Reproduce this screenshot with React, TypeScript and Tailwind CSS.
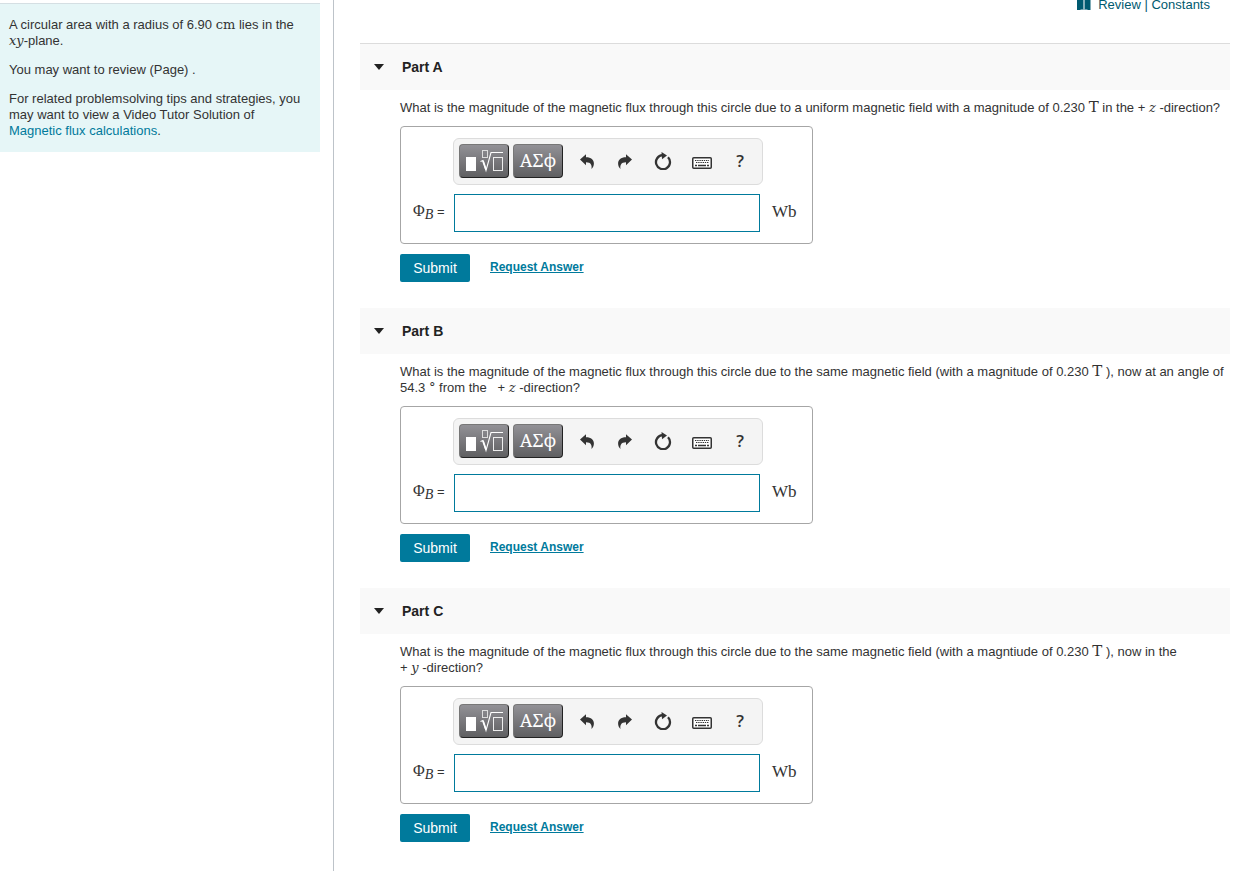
import type { ReactNode } from "react";

function MathText({ children, italic = false }: { children: ReactNode; italic?: boolean }) {
  return (
    <span
      className={
        italic
          ? "font-['DejaVu_Serif',serif] text-[13px] leading-3 italic"
          : "font-['DejaVu_Serif',serif] text-[13px] leading-3"
      }
    >
      {children}
    </span>
  );
}

function Unit({ children }: { children: ReactNode }) {
  return <span className="font-['DejaVu_Serif',serif] text-[15px] leading-3">{children}</span>;
}

function TemplatesIcon() {
  return (
    <svg width="38" height="24" viewBox="0 0 38 24" fill="none" aria-hidden="true">
      <rect x="1" y="8" width="10" height="14" fill="#fff" />
      <rect x="17.500" y="1.500" width="5" height="7" stroke="#ddd" />
      <path d="M15.500 12.500l2.500-1 3 10L26 3.500H38" stroke="#fff" strokeWidth="1.100" />
      <path d="M18 12l3 8.500" stroke="#fff" strokeWidth="1.800" />
      <rect x="28.500" y="8.500" width="9" height="13" stroke="#eee" />
    </svg>
  );
}

function UndoIcon() {
  return (
    <svg width="14" height="15" viewBox="0 0 14 15" aria-hidden="true">
      <path d="M0 5.500L6 .2V3.200c5.200 0 7.900 2.600 7.900 6.300 0 2.200-.8 4-2.400 5.500.6-4-.5-6.800-5.500-6.800v3z" fill="#333" />
    </svg>
  );
}

function RedoIcon() {
  return (
    <svg width="14" height="15" viewBox="0 0 14 15" aria-hidden="true">
      <path d="M14 5.500L8 .2V3.200C2.800 3.200.1 5.800.1 9.500c0 2.200.8 4 2.400 5.500-.6-4 .5-6.800 5.500-6.800v3z" fill="#333" />
    </svg>
  );
}

function ResetIcon() {
  return (
    <svg width="18" height="18" viewBox="0 0 18 18" fill="none" aria-hidden="true">
      <path d="M14 5.300A7 7 0 1 1 8.500 3.200" stroke="#333" strokeWidth="2.300" />
      <path d="M7.500 0l5.500 3.400-5 3.800z" fill="#333" />
    </svg>
  );
}

function KeyboardIcon() {
  return (
    <svg width="20" height="12" viewBox="0 0 20 12" fill="none" aria-hidden="true">
      <rect x=".75" y=".75" width="18.500" height="10.500" rx="1" fill="#fff" stroke="#333" strokeWidth="1.500" />
      <path d="M3 3.500h14M4 5.500h13" stroke="#333" strokeWidth="1.200" strokeDasharray="1.400 .8" />
      <path d="M3 8.500h2M6 8.500h8M15 8.500h2" stroke="#333" strokeWidth="1.300" />
    </svg>
  );
}

const darkButton =
  "flex h-[34px] w-[50px] items-center justify-center rounded border border-[#222] border-t-[#777] border-l-[#777] bg-linear-to-b from-[#929196] to-[#606062] text-white";
const toolButton = "flex h-[34px] w-[38px] items-center justify-center text-[#333]";

function Toolbar() {
  return (
    <div className="flex h-[47px] w-[310px] items-start rounded-md border border-[#dcdcdc] bg-[#f4f4f4] pt-[5px] pl-[5px]">
      <div className="flex gap-1">
        <button type="button" aria-label="Templates" className={darkButton}>
          <TemplatesIcon />
        </button>
        <button type="button" aria-label="Symbols" className={`${darkButton} pb-[2px]`}>
          <span className="font-['Noto_Serif','Liberation_Serif',serif] text-[18px] leading-none">ΑΣϕ</span>
        </button>
      </div>
      <div className="flex pl-[5px]">
        <button type="button" aria-label="Undo" className={toolButton}><UndoIcon /></button>
        <button type="button" aria-label="Redo" className={toolButton}><RedoIcon /></button>
        <button type="button" aria-label="Reset" className={toolButton}><ResetIcon /></button>
        <button type="button" aria-label="Keyboard shortcuts" className={`${toolButton} pt-1 pl-[2px]`}><KeyboardIcon /></button>
        <button type="button" aria-label="Help" className={`${toolButton} pl-[2px] font-['Open_Sans',sans-serif] text-[17px] font-semibold`}>?</button>
      </div>
    </div>
  );
}

function Part({ id, first = false, children }: { id: string; first?: boolean; children: ReactNode }) {
  return (
    <section className="mb-[26px]">
      <h2 className={first ? "border-t border-[#dcdcdc] bg-[#f9f9f9]" : "bg-[#f9f9f9]"}>
        <button type="button" aria-expanded="true" className="flex h-[46px] w-full items-center gap-[18px] pl-[14px] text-[14px] font-bold text-[#222]">
          <svg width="10" height="6" viewBox="0 0 10 6" aria-hidden="true">
            <path d="M0 0h10L5 6z" fill="#222" />
          </svg>
          Part {id}
        </button>
      </h2>
      <div className="pt-[10px] pl-10">
        <p className="text-[13px] leading-4">{children}</p>
        <div className="mt-[10px] w-[413px] rounded border border-[#a6a6a6] pt-[11px] pb-[11px] pl-3">
          <div className="pl-10"><Toolbar /></div>
          <div className="mt-[9px] flex items-center">
            <label htmlFor={`answer-${id}`} className="w-[41px] pb-[3px] text-[13px] leading-4 whitespace-nowrap">
              <span className="font-['Liberation_Serif',serif] text-[16px] leading-none">Φ</span>
              <sub className="bottom-[-3px] font-['Liberation_Serif',serif] text-[14px] leading-none italic">B</sub> =
            </label>
            <input id={`answer-${id}`} type="text" className="h-[38px] w-[306px] border border-[#007a9c] bg-white px-2 text-base outline-none" />
            <span className="ml-3 pb-[3px] font-['Liberation_Serif',serif] text-[17px] leading-5">Wb</span>
          </div>
        </div>
        <div className="mt-[10px] flex items-center gap-5">
          <button type="button" className="h-7 w-[70px] rounded-xs bg-[#007a9c] text-[14px] text-white">Submit</button>
          <a href="#request" className="pb-[2px] text-[12px] leading-4 font-bold text-[#007a9c] underline">Request Answer</a>
        </div>
      </div>
    </section>
  );
}

export default function App() {
  return (
    <div className="flex min-h-screen bg-white font-['Liberation_Sans',Arial,sans-serif] text-[13px] text-[#333]">
      <aside className="w-[334px] shrink-0 border-r border-[#bdc3c9] pt-[3px] pr-[13px]">
        <div className="flex flex-col gap-[13px] border-t border-[#d5dfe3] bg-[#e6f6f7] py-[13px] pr-3 pl-[9px] leading-4">
          <p>A circular area with a radius of 6.90 <MathText>cm</MathText> lies in the <MathText italic>xy</MathText>-plane.</p>
          <p>You may want to review (Page) .</p>
          <p>
            For related problemsolving tips and strategies, you may want to view a Video Tutor Solution of{" "}
            <a href="#flux" className="text-[#007a9c]">Magnetic flux calculations</a>.
          </p>
        </div>
      </aside>
      <main className="min-w-0 flex-1 pr-5 pl-[26px]">
        <nav className="mb-[33px] flex h-[10px] items-center justify-end pr-5 leading-[10px] text-[#005a70]">
          <svg width="14" height="14" viewBox="0 0 14 14" className="mr-[7px]" aria-hidden="true">
            <path d="M0 1c3-1 5-.5 6.500.500V12H0zM7.500 1.500C9 .5 11 0 13.500 1v11h-6z" fill="#005a70" />
            <path d="M7 1.500V12M3.500 11.500h7" stroke="#8fb5c0" strokeWidth=".8" />
          </svg>
          <p>
            <a href="#review">Review</a> | <a href="#constants">Constants</a>
          </p>
        </nav>
        <Part id="A" first>
          What is the magnitude of the magnetic flux through this circle due to a uniform magnetic field with a magnitude of 0.230 <Unit>T</Unit> in the + <MathText italic>z</MathText> -direction?
        </Part>
        <Part id="B">
          What is the magnitude of the magnetic flux through this circle due to the same magnetic field (with a magnitude of 0.230 <Unit>T</Unit> ), now at an angle of 54.3 <MathText>°</MathText> from the &nbsp; + <MathText italic>z</MathText> -direction?
        </Part>
        <Part id="C">
          What is the magnitude of the magnetic flux through this circle due to the same magnetic field (with a magntiude of 0.230 <Unit>T</Unit> ), now in the<br />+ <MathText italic>y</MathText> -direction?
        </Part>
      </main>
    </div>
  );
}
